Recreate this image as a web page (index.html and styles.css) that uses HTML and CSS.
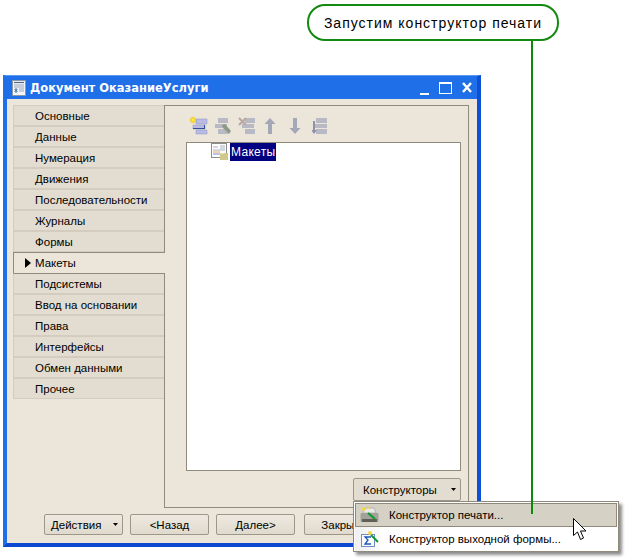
FILE: index.html
```html
<!DOCTYPE html>
<html lang="ru">
<head>
<meta charset="utf-8">
<title>Документ ОказаниеУслуги</title>
<link rel="stylesheet" href="styles.css">
</head>
<body>
<div class="canvas">
  <div class="callout">Запустим конструктор печати</div>
  <div class="window">
    <div class="titlebar">
      <svg class="title-icon" width="16" height="16" viewBox="0 0 16 16"><rect x="1.500" y="0.500" width="13" height="15" fill="#f4f6f8" stroke="#8a98ac"/><path d="M3 2.500h10" stroke="#54688a" stroke-width="1.200"/><path d="M3 5h10M3 7h10M8 9h5M8 11h5" stroke="#9aa6ba"/><path d="M5 8v5M3.500 9.500l3 2M6.500 9.500l-3 2" stroke="#3a6fb0"/></svg>
      <span class="title-text">Документ ОказаниеУслуги</span>
      <div class="controls">
        <svg width="54" height="18" viewBox="0 0 54 18"><path d="M0 14h9v2H0z" fill="#fff"/><rect x="19.500" y="3.500" width="12" height="11" fill="none" stroke="#fff"/><path d="M19 4h13" stroke="#fff" stroke-width="2"/><path d="M43 4l8 9M51 4l-8 9" stroke="#fff" stroke-width="2.400"/></svg>
      </div>
    </div>
    <div class="client">
      <div class="main">
        <ul class="tabs">
          <li class="tab">Основные</li>
          <li class="tab">Данные</li>
          <li class="tab">Нумерация</li>
          <li class="tab">Движения</li>
          <li class="tab">Последовательности</li>
          <li class="tab">Журналы</li>
          <li class="tab">Формы</li>
          <li class="tab active"><svg class="tab-arrow" width="6" height="10" viewBox="0 0 6 10"><path d="M0 0l6 5-6 5z" fill="#000"/></svg>Макеты</li>
          <li class="tab after-active">Подсистемы</li>
          <li class="tab">Ввод на основании</li>
          <li class="tab">Права</li>
          <li class="tab">Интерфейсы</li>
          <li class="tab">Обмен данными</li>
          <li class="tab">Прочее</li>
        </ul>
        <div class="panel">
          <div class="toolbar">
            <svg width="18" height="18" viewBox="0 0 18 18"><path d="M6 2h11v5H6zM3 8h12v4H3zM6 13h11v4H6z" fill="#b8bce4" stroke="#8c90c0" stroke-width="0.500"/><path d="M3 11h12v1H3z" fill="#30509c"/><path d="M14 8h1v4h-1z" fill="#30509c"/><circle cx="3" cy="3" r="2.500" fill="#ffe840" stroke="#e8c000" stroke-width="0.800"/></svg>
            <svg width="18" height="18" viewBox="0 0 18 18"><path d="M4 1h10v5H4zM1 7h12v4H1zM4 12h10v5H4z" fill="#b9b9c6"/><path d="M8 8l3-1 6 7-2 3-6-6z" fill="#8d9a86"/></svg>
            <svg width="18" height="18" viewBox="0 0 18 18"><path d="M7 1h10v5H7zM4 7h12v4H4zM7 12h10v5H7z" fill="#b9b9c6"/><path d="M1 1l7 7M8 1L1 8" stroke="#b8a8a0" stroke-width="2"/></svg>
            <svg class="gap-up" width="12" height="16" viewBox="0 0 12 16"><path d="M6 0l5.500 6H8v10H4V6H.5z" fill="#a3a7b7"/></svg>
            <svg class="gap-down" width="12" height="16" viewBox="0 0 12 16"><path d="M4 0h4v10h3.500L6 16 .5 10H4z" fill="#a3a7b7"/></svg>
            <svg class="gap-last" width="16" height="18" viewBox="0 0 16 18"><path d="M4 1h11v5H4zM2 7h13v4H2zM4 12h11v5H4z" fill="#b9b9c6"/><path d="M1 4h2v9h2l-3 4-3-4h2z" fill="#8f93a6"/></svg>
          </div>
          <div class="tree">
            <div class="tree-row">
              <svg width="18" height="18" viewBox="0 0 18 18"><rect x="0.500" y="0.500" width="15" height="14" fill="#fdfdfd" stroke="#8c8c8c"/><path d="M2 4h5M9 3h5M9 5h5M2 7h12" stroke="#a8b0c0"/><path d="M2 9h7" stroke="#e8a050"/><path d="M2 11h7" stroke="#7090d0"/><rect x="9" y="10" width="8" height="7" fill="#cfc98c"/><path d="M9 10h4v1H9z" fill="#e8e2a8"/></svg>
              <span class="tree-label">Макеты</span>
            </div>
          </div>
          <div class="panel-foot">
            <button class="btn btn-drop" type="button">Конструкторы<svg class="caret" width="5" height="3" viewBox="0 0 5 3"><path d="M0 0h5L2.500 3z" fill="#000"/></svg></button>
          </div>
        </div>
      </div>
      <div class="footer">
        <button class="btn btn-act" type="button">Действия<svg class="caret" width="5" height="3" viewBox="0 0 5 3"><path d="M0 0h5L2.500 3z" fill="#000"/></svg></button>
        <button class="btn" type="button">&lt;Назад</button>
        <button class="btn" type="button">Далее&gt;</button>
        <button class="btn btn-close" type="button">Закрыть</button>
      </div>
    </div>
  </div>
  <div class="leader"></div>
  <div class="menu">
    <div class="menu-item hot">
      <span class="menu-icon"><svg width="20" height="18" viewBox="0 0 20 18"><path d="M4 2h10l2 5H3z" fill="#e8e8e8" stroke="#999" stroke-width="0.600"/><rect x="0.500" y="7" width="18" height="9" rx="1" fill="#a2a29a"/><rect x="2" y="13" width="15" height="3" fill="#5f5f58"/><path d="M8 7l7 6" stroke="#129a2c" stroke-width="2.200"/><circle cx="4" cy="3" r="2" fill="#f5d840"/><circle cx="8" cy="2" r="1" fill="#f5d840"/></svg></span>
      <span>Конструктор печати...</span>
    </div>
    <div class="menu-item">
      <span class="menu-icon"><svg width="20" height="18" viewBox="0 0 20 18"><rect x="1.500" y="4.500" width="13" height="12" fill="#fdfdfd" stroke="#6d8cc8"/><path d="M11 7H5l3 3-3 4h6" fill="none" stroke="#1a56b8" stroke-width="1.300"/><path d="M11 5l7 7" stroke="#129a2c" stroke-width="2"/><circle cx="10" cy="3" r="2" fill="#f5d840"/></svg></span>
      <span>Конструктор выходной формы...</span>
    </div>
  </div>
  <svg class="cursor" width="14" height="23" viewBox="0 0 14 23"><path d="M.5.500v17l4-3.500 3 7.500 3-1.500-3-7h5.500z" fill="#fff" stroke="#000"/></svg>
</div>
</body>
</html>
```
FILE: styles.css
```css
* { box-sizing: border-box; }
html, body { margin: 0; padding: 0; background: #fff; }
.canvas {
  position: relative;
  width: 625px;
  height: 558px;
  overflow: hidden;
  font-family: "Liberation Sans", Arial, sans-serif;
  font-size: 11.500px;
  color: #000;
}
.callout {
  position: absolute;
  left: 307px;
  top: 4px;
  width: 252px;
  height: 37px;
  border: 2px solid #128a12;
  border-radius: 18px;
  display: flex;
  align-items: center;
  justify-content: center;
  font-size: 14px;
  letter-spacing: 1px;
  background: #fff;
}
.leader {
  position: absolute;
  left: 531px;
  top: 41px;
  width: 2px;
  height: 473px;
  background: #0b8a0b;
  z-index: 3;
}
.window {
  position: absolute;
  left: 3px;
  top: 75px;
  width: 478px;
  height: 472px;
  display: flex;
  flex-direction: column;
  background: #1e6fe8;
  border-left: 4px solid #1e6fe8;
  border-right: 4px solid #0f4fd8;
  border-bottom: 4px solid #0b4ad0;
  border-top: 1px solid #5b9cf2;
}
.titlebar {
  height: 23px;
  flex: none;
  display: flex;
  align-items: center;
  padding: 0 0 0 4px;
  color: #fff;
}
.title-icon { flex: none; margin-top: 1px; }
.title-text {
  margin-left: 3px;
  font-family: "DejaVu Sans", sans-serif;
  font-weight: 700;
  font-size: 11.500px;
}
.controls { margin-left: auto; display: flex; margin-right: 3px; }
.client {
  flex: 1;
  background: #ebe5da;
  padding: 6px 8px 0 6px;
  display: flex;
  flex-direction: column;
}
.main { display: flex; height: 403px; flex: none; }
.tabs {
  list-style: none;
  margin: 0;
  padding: 0;
  width: 151px;
  flex: none;
}
.tab {
  height: 21px;
  display: flex;
  align-items: center;
  padding-left: 21px;
  background: #e3ddd1;
  border-top: 1px solid #d3ccbf;
  border-left: 1px solid #d3ccbf;
  border-bottom: 1px solid #d3ccbf;
}
.tab.active {
  background: #ebe5da;
  border-bottom: 0;
  border-top-color: #8f8a7c;
  border-left-color: #8f8a7c;
  position: relative;
  margin-right: -1px;
  padding-left: 11px;
}
.tab.after-active { border-top-color: #8f8a7c; }
.tab-arrow { margin-right: 4px; }
.panel {
  flex: 1;
  display: flex;
  flex-direction: column;
  border: 1px solid #8f8a7c;
  padding: 11px 7px 7px 21px;
}
.toolbar {
  height: 18px;
  margin-left: 4px;
  display: flex;
  align-items: center;
  gap: 6px;
  flex: none;
}
.gap-up { margin-left: 2px; }
.gap-down { margin-left: 7px; }
.gap-last { margin-left: 5px; }
.tree {
  margin-top: 7px;
  height: 329px;
  background: #fff;
  border: 1px solid #8f8a7c;
  padding: 0 0 0 24px;
  flex: none;
}
.tree-row { display: flex; align-items: flex-start; gap: 1px; }
.tree-label {
  background: #000080;
  color: #fff;
  height: 18px;
  line-height: 18px;
  padding: 0 1px;
  font-size: 12px;
  letter-spacing: 0.300px;
}
.panel-foot { display: flex; justify-content: flex-end; margin-top: 7px; }
.btn {
  font: inherit;
  color: #000;
  height: 21px;
  width: 79px;
  padding: 0;
  background: linear-gradient(#eee9df, #e0dace);
  border: 1px solid #9c9789;
  border-radius: 2px;
  display: flex;
  align-items: center;
  justify-content: center;
}
.btn-drop { width: 108px; height: 23px; justify-content: flex-start; padding-left: 9px; background: #e3ddd1; }
.btn-act { justify-content: flex-start; padding-left: 6px; }
.caret { margin-left: auto; margin-right: 4px; }
.footer {
  display: flex;
  gap: 7px;
  margin-top: 6px;
  padding-left: 31px;
}
.btn-close { margin-left: 2px; }
.menu {
  position: absolute;
  left: 353px;
  top: 501px;
  width: 266px;
  height: 51px;
  background: #fff;
  border: 1px solid #8f8a7c;
  padding: 1px;
  box-shadow: 3px 3px 3px rgba(0, 0, 0, 0.45);
  z-index: 2;
}
.menu-item {
  height: 24px;
  display: flex;
  align-items: center;
}
.menu-item.hot {
  background: #d5d1c4;
  border: 1px solid #8f8a7c;
}
.menu-icon {
  width: 33px;
  flex: none;
  height: 100%;
  display: flex;
  align-items: center;
  padding-left: 4px;
}
.menu-item:not(.hot) .menu-icon {
  background: linear-gradient(90deg, #f0f0f0, #fbfbfb);
  width: 25px;
  margin-right: 9px;
  padding-left: 5px;
}
.cursor { position: absolute; left: 573px; top: 518px; z-index: 4; }
```
